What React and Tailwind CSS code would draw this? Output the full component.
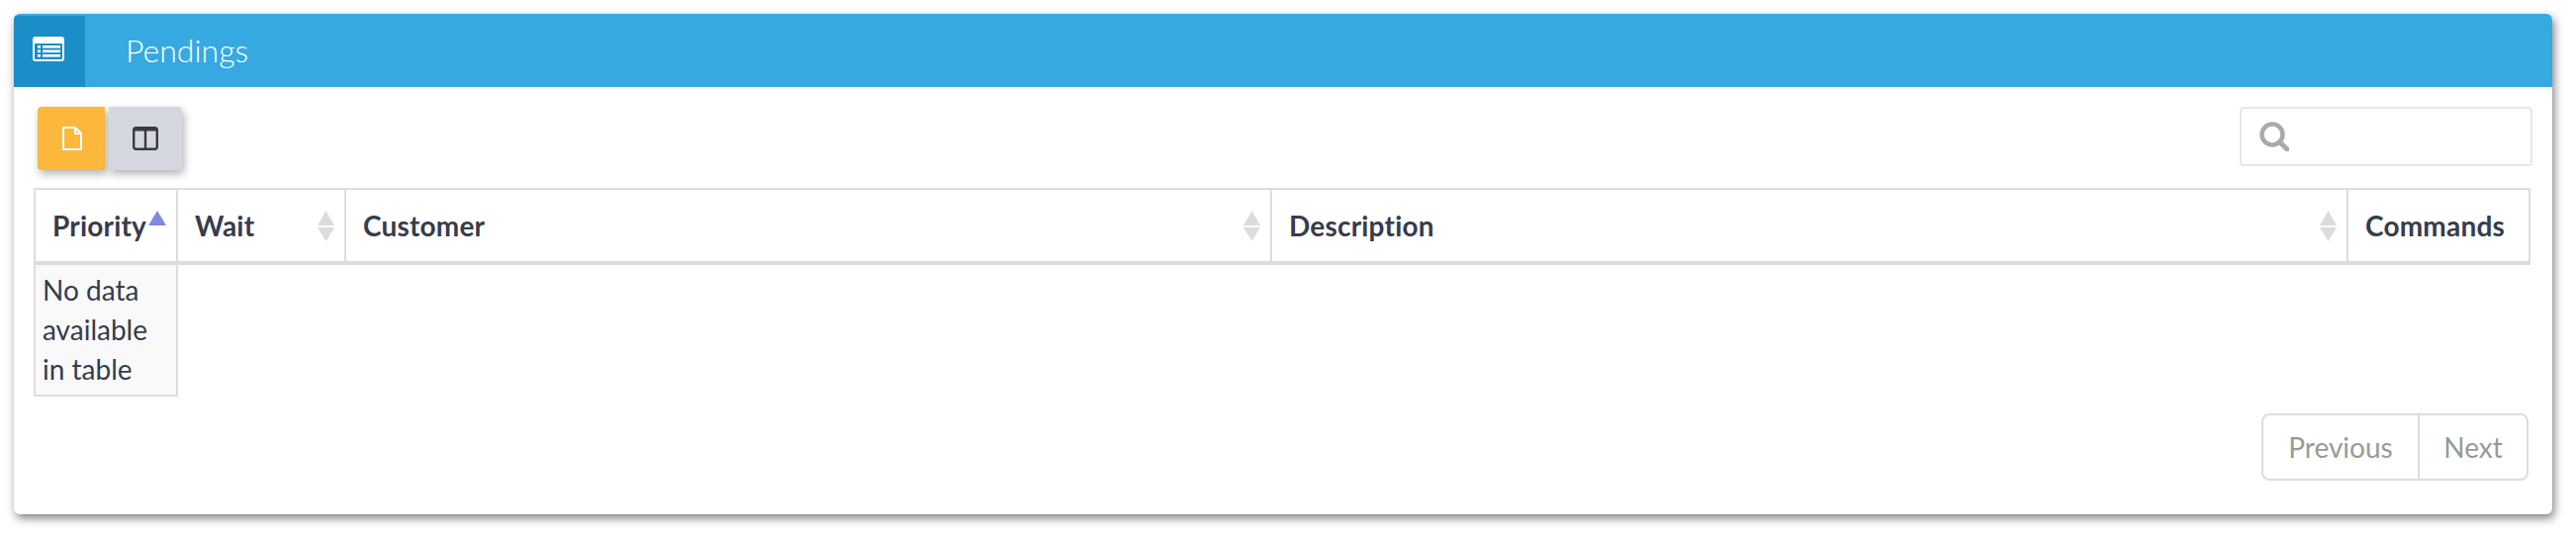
const Arrows = () => (
  <svg className="absolute right-[10px] top-[21px]" width="17" height="31" viewBox="0 0 17 31">
    <path d="M8.5 0 L17 15 L0 15 Z" fill="#dcdcdc" />
    <path d="M8.5 31 L17 17 L0 17 Z" fill="#dcdcdc" />
  </svg>
);

const Th = ({ w, children, arrows, last }) => (
  <th
    className={`relative h-[78px] border-t-2 border-l-2 border-b-4 border-[#dddddd] text-left font-bold tracking-[0.2px] text-[#363c4c] ${last ? "border-r-2" : ""} ${w}`}
  >
    <span className="pl-[17px]">{children}</span>
    {arrows && <Arrows />}
  </th>
);

export default function App() {
  return (
    <div className="h-[542px] w-[2604px] bg-white pl-[14px] pt-[14px] font-['Lato',sans-serif]">
      <div className="h-[506px] w-[2566px] overflow-hidden rounded-[6px] bg-white shadow-[2px_4px_10px_rgba(0,0,0,0.5)]">
        <div className="flex h-[74px] items-end bg-[#36a9e1]">
          <div className="flex h-[72px] w-[72px] items-center justify-center bg-[#1b8dc7]">
            <svg className="mb-[5px] mr-[2px]" width="32" height="25" viewBox="0 0 32 25">
              <path fillRule="evenodd" fill="#fff" d="M3 0H29a3 3 0 0 1 3 3V22a3 3 0 0 1-3 3H3a3 3 0 0 1-3-3V3a3 3 0 0 1 3-3ZM2 7V22a1 1 0 0 0 1 1H29a1 1 0 0 0 1-1V7Z" />
              <rect x="5" y="9" width="3" height="2.6" fill="#fff" />
              <rect x="5" y="13.5" width="3" height="2.6" fill="#fff" />
              <rect x="5" y="18" width="3" height="2.6" fill="#fff" />
              <rect x="10" y="9" width="18" height="2.6" fill="#fff" />
              <rect x="10" y="13.5" width="18" height="2.6" fill="#fff" />
              <rect x="10" y="18" width="18" height="2.6" fill="#fff" />
            </svg>
          </div>
          <div className="flex h-[74px] items-center pl-[41px] text-[32px] font-light text-white">Pendings</div>
        </div>
        <div className="px-[20px] pt-[20px]">
          <div className="flex h-[82px] items-start justify-between">
            <div className="ml-[4px] flex gap-[4px]">
              <button className="flex h-[64px] w-[68px] items-center justify-center rounded-l-[4px] bg-[#fbb83b] shadow-[2px_4px_8px_rgba(0,0,0,0.3)]">
                <svg className="ml-[2px]" width="20" height="24" viewBox="0 0 20 24" fill="none" stroke="#fff" strokeWidth="2">
                  <path d="M1 1H13L19 7V23H1Z" />
                  <path d="M13 1V7H19" />
                </svg>
              </button>
              <button className="flex h-[64px] w-[74px] items-center justify-center rounded-r-[4px] bg-[#d5d7e0] shadow-[2px_4px_8px_rgba(0,0,0,0.3)]">
                <svg width="26" height="24" viewBox="0 0 26 24" fill="none" stroke="#3a3a3c" strokeWidth="2.4">
                  <rect x="1.2" y="1.2" width="23.6" height="21.6" rx="2.5" />
                  <path d="M13 1V23" />
                  <path d="M2 3H24" strokeWidth="3" />
                </svg>
              </button>
            </div>
            <div className="flex h-[60px] w-[296px] items-center rounded-[4px] border-2 border-[#e6e7ee] pl-[18px]">
              <svg width="30" height="30" viewBox="0 0 30 30" fill="none" stroke="#aaaaaa">
                <circle cx="13" cy="13" r="10.5" strokeWidth="4.5" />
                <path d="M20.5 20.5L28 28" strokeWidth="5" strokeLinecap="round" />
              </svg>
            </div>
          </div>
          <table className="w-[2524px] table-fixed border-separate border-spacing-0 text-[28px] leading-[40px]">
            <thead>
              <tr>
                <Th w="w-[144px]">
                  Priority
                  <svg className="absolute left-[114px] top-[21px]" width="18" height="15" viewBox="0 0 18 15">
                    <path d="M9 0 L18 15 L0 15 Z" fill="#8188e0" />
                  </svg>
                </Th>
                <Th w="w-[170px]" arrows>Wait</Th>
                <Th w="w-[936px]" arrows>Customer</Th>
                <Th w="w-[1088px]" arrows>Description</Th>
                <Th w="w-[186px]" last>Commands</Th>
              </tr>
            </thead>
            <tbody>
              <tr>
                <td colSpan={5} className="p-0">
                  <div className="w-[146px] border-2 border-t-0 border-[#dddddd] bg-[#f9f9f9] pb-[6px] pl-[7px] pr-[12px] pt-[5px] text-[#363c4c]">
                    No data available in table
                  </div>
                </td>
              </tr>
            </tbody>
          </table>
          <div className="mr-[4px] mt-[17px] flex justify-end text-[28px] text-[#999999]">
            <div className="flex h-[68px] items-center rounded-[8px] border-2 border-[#dddddd]">
              <span className="flex h-full w-[158px] items-center justify-center border-r-2 border-[#dddddd]">Previous</span>
              <span className="flex h-full w-[108px] items-center justify-center">Next</span>
            </div>
          </div>
        </div>
      </div>
    </div>
  );
}
